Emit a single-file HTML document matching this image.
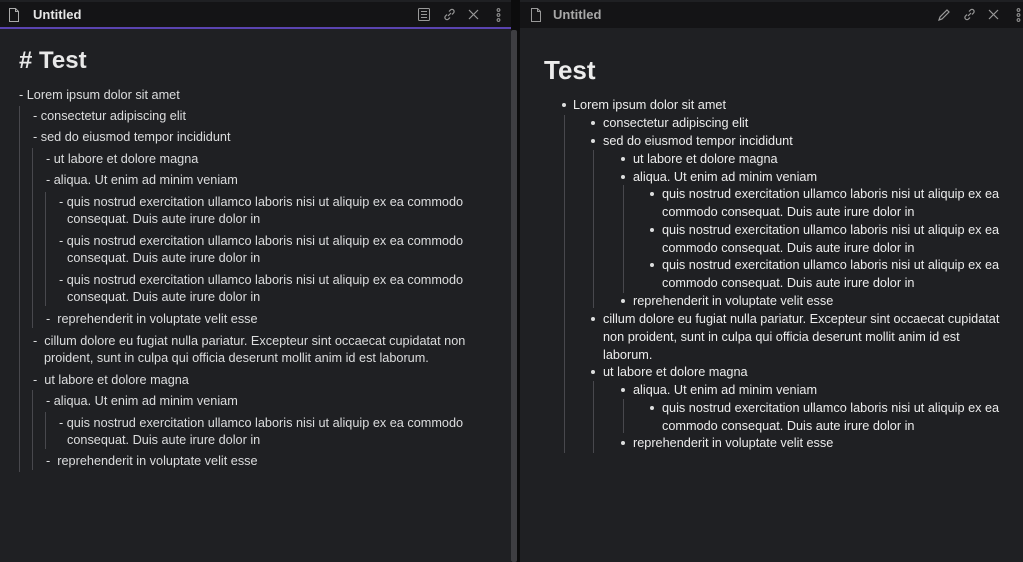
<!DOCTYPE html><html><head><style>
*{margin:0;padding:0;box-sizing:border-box}
body{width:1023px;height:562px;background:#0c0c0d;overflow:hidden;position:relative;font-family:"Liberation Sans",sans-serif;color:#dcddde;font-size:12.7px}
.p{position:absolute;top:0;height:562px;background:#1f2023}
.h{position:absolute;top:2px;height:26px;background:#141416;left:0;right:0}
.t{position:absolute;white-space:nowrap;line-height:16px}
.g{position:absolute;width:1px;background:#48484d}
.b{position:absolute;width:4px;height:4px;border-radius:50%;background:#dcddde}
svg{position:absolute}
.r .t{color:#ececec}
</style></head><body>
<div class="p" style="left:0;width:511px">
<div class="h" style="border-bottom:2px solid #5a44b0;height:27px"></div>
</div>
<div style="position:absolute;left:511px;top:30px;width:6px;height:532px;background:#3e3e42;border-radius:2px"></div>
<div class="p" style="left:520px;width:503px"><div class="h"></div></div>

<svg style="left:8px;top:8px" width="12" height="14" viewBox="0 0 12 14" fill="none" stroke="#aaa" stroke-width="1"><path d="M1.5 .5h6l3 3v10h-9z M7.5 .5v3h3"/></svg>
<div class="t" style="left:33px;top:7px;font-weight:bold;font-size:13px;color:#e6e6e6">Untitled</div>
<svg style="left:418px;top:8px" width="12" height="13" viewBox="0 0 12 13" fill="none" stroke="#999"><rect x=".5" y=".5" width="11" height="12" rx="1"/><path d="M3 3.5h6M3 6.5h6M3 9.5h6"/></svg>
<svg style="left:443px;top:8px" width="13" height="13" viewBox="0 0 13 13" fill="none" stroke="#999" stroke-width="1.2"><path d="M5 8l3-3M6 3.5l1.5-1.5a2 2 0 013 3L9 6.5M7 9.5L5.5 11a2 2 0 01-3-3L4 6.5"/></svg>
<svg style="left:468px;top:9px" width="11" height="11" viewBox="0 0 11 11" stroke="#999" stroke-width="1.2"><path d="M1 1l9 9M10 1l-9 9"/></svg>
<svg style="left:496px;top:8px" width="5" height="14" viewBox="0 0 5 14" fill="none" stroke="#999"><circle cx="2.5" cy="2" r="1.4"/><circle cx="2.5" cy="7" r="1.4"/><circle cx="2.5" cy="12" r="1.4"/></svg>
<svg style="left:530px;top:8px" width="12" height="14" viewBox="0 0 12 14" fill="none" stroke="#999" stroke-width="1"><path d="M1.5 .5h6l3 3v10h-9z M7.5 .5v3h3"/></svg>
<div class="t" style="left:553px;top:7px;font-weight:bold;font-size:13px;color:#a8a8a8">Untitled</div>
<svg style="left:938px;top:8px" width="13" height="13" viewBox="0 0 13 13" fill="none" stroke="#999" stroke-width="1.2"><path d="M1 12l1-3 7-7 2 2-7 7z"/></svg>
<svg style="left:963px;top:8px" width="13" height="13" viewBox="0 0 13 13" fill="none" stroke="#999" stroke-width="1.2"><path d="M5 8l3-3M6 3.5l1.5-1.5a2 2 0 013 3L9 6.5M7 9.5L5.5 11a2 2 0 01-3-3L4 6.5"/></svg>
<svg style="left:988px;top:9px" width="11" height="11" viewBox="0 0 11 11" stroke="#999" stroke-width="1.2"><path d="M1 1l9 9M10 1l-9 9"/></svg>
<svg style="left:1016px;top:8px" width="5" height="14" viewBox="0 0 5 14" fill="none" stroke="#999"><circle cx="2.5" cy="2" r="1.4"/><circle cx="2.5" cy="7" r="1.4"/><circle cx="2.5" cy="12" r="1.4"/></svg>

<div class="t" style="left:19px;top:47px;font-size:24px;line-height:28px;font-weight:bold;color:#e8e8e8"># Test</div>
<div class="g" style="left:19px;top:106px;height:366px"></div>
<div class="g" style="left:32px;top:148px;height:180px"></div>
<div class="g" style="left:32px;top:390px;height:80px"></div>
<div class="g" style="left:45px;top:192px;height:114px"></div>
<div class="g" style="left:45px;top:412px;height:37px"></div>
<div class="t" style="left:19px;top:87px">- Lorem ipsum dolor sit amet</div>
<div class="t" style="left:33px;top:108px">- consectetur adipiscing elit</div>
<div class="t" style="left:33px;top:129px">- sed do eiusmod tempor incididunt</div>
<div class="t" style="left:46px;top:151px">- ut labore et dolore magna</div>
<div class="t" style="left:46px;top:172px">- aliqua. Ut enim ad minim veniam</div>
<div class="t" style="left:59px;top:194px">- quis nostrud exercitation ullamco laboris nisi ut aliquip ex ea commodo</div>
<div class="t" style="left:67px;top:211px">consequat. Duis aute irure dolor in</div>
<div class="t" style="left:59px;top:233px">- quis nostrud exercitation ullamco laboris nisi ut aliquip ex ea commodo</div>
<div class="t" style="left:67px;top:250px">consequat. Duis aute irure dolor in</div>
<div class="t" style="left:59px;top:272px">- quis nostrud exercitation ullamco laboris nisi ut aliquip ex ea commodo</div>
<div class="t" style="left:67px;top:289px">consequat. Duis aute irure dolor in</div>
<div class="t" style="left:46px;top:311px">-&nbsp; reprehenderit in voluptate velit esse</div>
<div class="t" style="left:33px;top:333px">-&nbsp; cillum dolore eu fugiat nulla pariatur. Excepteur sint occaecat cupidatat non</div>
<div class="t" style="left:44px;top:350px">proident, sunt in culpa qui officia deserunt mollit anim id est laborum.</div>
<div class="t" style="left:33px;top:372px">-&nbsp; ut labore et dolore magna</div>
<div class="t" style="left:46px;top:393px">- aliqua. Ut enim ad minim veniam</div>
<div class="t" style="left:59px;top:415px">- quis nostrud exercitation ullamco laboris nisi ut aliquip ex ea commodo</div>
<div class="t" style="left:67px;top:432px">consequat. Duis aute irure dolor in</div>
<div class="t" style="left:46px;top:453px">-&nbsp; reprehenderit in voluptate velit esse</div>

<div class="r">
<div class="t" style="left:544px;top:55px;font-size:26px;line-height:30px;font-weight:bold;color:#ececec">Test</div>
<div class="g" style="left:564px;top:115px;height:338px"></div>
<div class="g" style="left:593px;top:150px;height:158px"></div>
<div class="g" style="left:593px;top:381px;height:72px"></div>
<div class="g" style="left:623px;top:185px;height:108px"></div>
<div class="g" style="left:623px;top:399px;height:34px"></div>
<div class="b" style="left:562px;top:103px"></div><div class="t" style="left:573px;top:97px">Lorem ipsum dolor sit amet</div>
<div class="b" style="left:591px;top:121px"></div><div class="t" style="left:603px;top:115px">consectetur adipiscing elit</div>
<div class="b" style="left:591px;top:139px"></div><div class="t" style="left:603px;top:133px">sed do eiusmod tempor incididunt</div>
<div class="b" style="left:621px;top:157px"></div><div class="t" style="left:633px;top:151px">ut labore et dolore magna</div>
<div class="b" style="left:621px;top:175px"></div><div class="t" style="left:633px;top:169px">aliqua. Ut enim ad minim veniam</div>
<div class="b" style="left:650px;top:192px"></div><div class="t" style="left:662px;top:186px">quis nostrud exercitation ullamco laboris nisi ut aliquip ex ea</div>
<div class="t" style="left:662px;top:204px">commodo consequat. Duis aute irure dolor in</div>
<div class="b" style="left:650px;top:228px"></div><div class="t" style="left:662px;top:222px">quis nostrud exercitation ullamco laboris nisi ut aliquip ex ea</div>
<div class="t" style="left:662px;top:240px">commodo consequat. Duis aute irure dolor in</div>
<div class="b" style="left:650px;top:263px"></div><div class="t" style="left:662px;top:257px">quis nostrud exercitation ullamco laboris nisi ut aliquip ex ea</div>
<div class="t" style="left:662px;top:275px">commodo consequat. Duis aute irure dolor in</div>
<div class="b" style="left:621px;top:299px"></div><div class="t" style="left:633px;top:293px">reprehenderit in voluptate velit esse</div>
<div class="b" style="left:591px;top:317px"></div><div class="t" style="left:603px;top:311px">cillum dolore eu fugiat nulla pariatur. Excepteur sint occaecat cupidatat</div>
<div class="t" style="left:603px;top:329px">non proident, sunt in culpa qui officia deserunt mollit anim id est</div>
<div class="t" style="left:603px;top:347px">laborum.</div>
<div class="b" style="left:591px;top:370px"></div><div class="t" style="left:603px;top:364px">ut labore et dolore magna</div>
<div class="b" style="left:621px;top:388px"></div><div class="t" style="left:633px;top:382px">aliqua. Ut enim ad minim veniam</div>
<div class="b" style="left:650px;top:406px"></div><div class="t" style="left:662px;top:400px">quis nostrud exercitation ullamco laboris nisi ut aliquip ex ea</div>
<div class="t" style="left:662px;top:418px">commodo consequat. Duis aute irure dolor in</div>
<div class="b" style="left:621px;top:441px"></div><div class="t" style="left:633px;top:435px">reprehenderit in voluptate velit esse</div>
</div>
</body></html>
